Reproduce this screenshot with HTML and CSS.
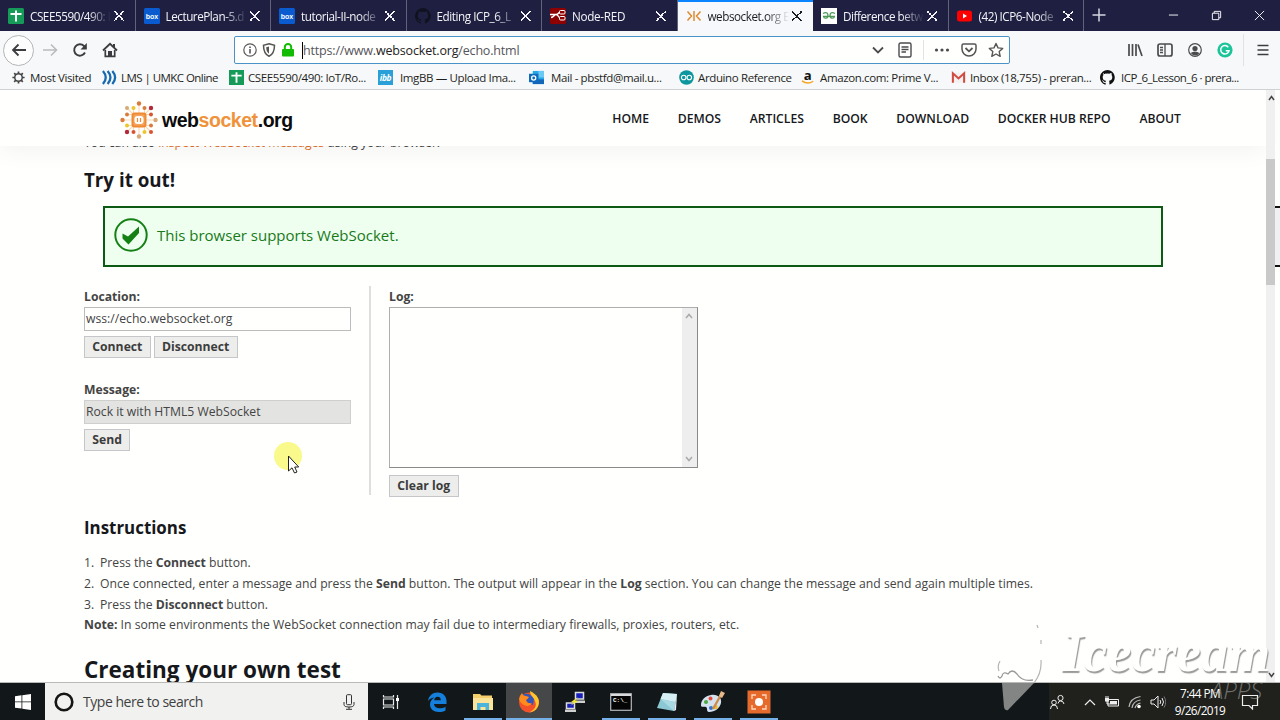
FILE: index.html
```html
<!DOCTYPE html>
<html lang="en">
<head>
  <meta charset="UTF-8">
  <title>websocket.org Echo Test</title>
  <link rel="stylesheet" href="styles.css">
</head>
<body>

  <!-- tabs -->
  <div class="tabs">
    <div class="tab"><svg class="ico" viewBox="0 0 16 16"><rect width="16" height="16" rx="1.5" fill="#169a57"/><path d="M8 2.500v11M2.500 6h11" stroke="#fff" stroke-width="2"/></svg><span>CSEE5590/490: I</span><b class="close"></b></div>
    <div class="tab"><svg class="ico" viewBox="0 0 16 16"><rect width="16" height="16" rx="1.500" fill="#0a5bd0"/><text x="8" y="10.500" class="box-text">box</text></svg><span>LecturePlan-5.d</span><b class="close"></b></div>
    <div class="tab"><svg class="ico" viewBox="0 0 16 16"><rect width="16" height="16" rx="1.500" fill="#0a5bd0"/><text x="8" y="10.500" class="box-text">box</text></svg><span>tutorial-II-node</span><b class="close"></b></div>
    <div class="tab"><svg class="ico" viewBox="0 0 16 16"><path fill="#11121f" d="M8 0a8 8 0 0 0-2.500 15.600c.4.100.5-.2.500-.4v-1.500c-2.200.5-2.700-1-2.700-1-.4-.9-.9-1.200-.9-1.200-.7-.5.100-.5.100-.5.800.100 1.200.8 1.200.8.7 1.300 1.900.9 2.300.7.100-.5.300-.9.500-1.100-1.800-.2-3.600-.9-3.600-4 0-.9.300-1.600.8-2.100-.1-.2-.4-1 .1-2.100 0 0 .7-.2 2.200.8a7.700 7.700 0 0 1 4 0c1.500-1 2.200-.8 2.200-.8.4 1.100.2 1.900.1 2.100.5.600.8 1.300.8 2.100 0 3.100-1.900 3.800-3.700 4 .3.200.6.700.6 1.500v2.200c0 .2.100.5.500.4A8 8 0 0 0 8 0z"/></svg><span>Editing ICP_6_L</span><b class="close"></b></div>
    <div class="tab"><svg class="ico" viewBox="0 0 16 16"><rect width="16" height="16" rx="1.500" fill="#8f0000"/><path d="M0 6.500h6c3 0 2-2.500 5-2.500M1 9.500c3 0 3-3 5-3 3 0 2 4 5 4" fill="none" stroke="#fff" stroke-width="1.300"/><rect x="9.500" y="2.500" width="5.500" height="3.500" rx="1" fill="#8f0000" stroke="#fff"/><rect x="9.500" y="8.500" width="5.500" height="3.500" rx="1" fill="#8f0000" stroke="#fff"/></svg><span class="plain">Node-RED</span><b class="close"></b></div>
    <div class="tab active"><svg class="ico" viewBox="0 0 16 16"><path d="M1.500 3.500l4 4.500-4 4.500M14.500 3.500l-4 4.500 4 4.500M8 3v10" fill="none" stroke="#e08a2c" stroke-width="1.500"/></svg><span>websocket.org E</span><b class="close"></b></div>
    <div class="tab"><svg class="ico" viewBox="0 0 16 16"><rect width="16" height="16" fill="#fff"/><path d="M2 5.500c4-2 5 0 5 2.500s-4 3-4.500.300H14M14 5.500c-4-2-5 0-5 2.500s4 3 4.500.300" fill="none" stroke="#4c9a55" stroke-width="1.300"/></svg><span>Difference betw</span><b class="close"></b></div>
    <div class="tab"><svg class="ico" viewBox="0 0 16 16"><rect y="2.500" width="15" height="11" rx="2.500" fill="#f00"/><path d="M6 5.500v5l4-2.500z" fill="#fff"/></svg><span>(42) ICP6-Node</span><b class="close"></b></div>
    <div class="new-tab"><svg width="14" height="14" viewBox="0 0 14 14"><path d="M7 .5v13M.5 7h13" stroke="#d5d5df" stroke-width="1.500"/></svg></div>
    <div class="win-buttons">
      <svg viewBox="0 0 12 12"><path d="M1 5.500h10" stroke="#fff"/></svg>
      <svg viewBox="0 0 12 12"><path d="M1.500 3.500h7v7h-7zM3.500 3.500v-2h7v7h-2" fill="none" stroke="#fff"/></svg>
      <svg viewBox="0 0 12 12"><path d="M1 1l10 10M11 1L1 11" stroke="#fff"/></svg>
    </div>
  </div>

  <!-- address bar -->
  <div class="toolbar">
    <div class="nav-buttons">
      <span class="back"><svg class="ico" viewBox="0 0 16 16"><path d="M15 8H2M7.500 2.500L2 8l5.500 5.500" fill="none" stroke="#3c3c40" stroke-width="1.800"/></svg></span>
      <svg class="ico" viewBox="0 0 16 16"><path d="M1 8h13M9 2.500L14.500 8 9 13.500" fill="none" stroke="#b9bbbc" stroke-width="1.600"/></svg>
      <svg class="ico" viewBox="0 0 16 16"><path d="M13 10.500A5.700 5.700 0 1 1 12 4l1.500 2" fill="none" stroke="#3c3c40" stroke-width="1.900"/><path d="M14.800 1v6.500H8.500z" fill="#3c3c40"/></svg>
      <svg class="ico" viewBox="0 0 16 16"><path d="M1 8.500L8 1.800l7 6.700" fill="none" stroke="#3c3c40" stroke-width="1.800"/><path d="M3.300 8v6.300h9.400V8" fill="none" stroke="#3c3c40" stroke-width="1.700"/><path d="M6 14V9h4v5zM11 2h2v4l-2-2z" fill="#3c3c40"/></svg>
    </div>
    <div class="url-bar">
      <svg class="ico" viewBox="0 0 16 16"><circle cx="8" cy="8" r="6.200" fill="none" stroke="#5a5a5d" stroke-width="1.200"/><path d="M8 7v4.500M8 4.500v1.500" stroke="#4b4b4e" stroke-width="1.500"/></svg>
      <svg class="ico" viewBox="0 0 16 16"><path d="M8 1.800l5.500 1.500c0 5-1 9-5.500 11-4.500-2-5.500-6-5.500-11z" fill="none" stroke="#555" stroke-width="1.500"/><path d="M8 4.500l-2.800.8c.1 3.200.8 5 2.800 6.500z" fill="#555"/></svg>
      <svg class="ico" viewBox="0 0 16 16"><rect x="2" y="7" width="12" height="7.500" rx="1" fill="#12bc00"/><path d="M4.800 8V5.200a3.200 3.200 0 0 1 6.400 0V8" fill="none" stroke="#12bc00" stroke-width="2"/></svg>
      <span class="url">https://www.<em>websocket.org</em>/echo.html</span>
      <div class="url-actions">
        <svg class="ico" viewBox="0 0 16 16"><path d="M3 5.500L8 10.500l5-5" fill="none" stroke="#4b4b4e" stroke-width="1.800"/></svg>
        <svg class="ico reader" viewBox="0 0 16 16"><rect x="2" y="1" width="12" height="14" rx="1.500" fill="none" stroke="#4b4b4e" stroke-width="1.400"/><path d="M4.500 5h7M4.500 7.500h7M4.500 10h4.500" stroke="#4b4b4e" stroke-width="1.300"/></svg>
        <i class="sep"></i>
        <svg class="ico" viewBox="0 0 16 16"><circle cx="2.500" cy="8" r="1.600" fill="#4b4b4e"/><circle cx="8" cy="8" r="1.600" fill="#4b4b4e"/><circle cx="13.500" cy="8" r="1.600" fill="#4b4b4e"/></svg>
        <svg class="ico" viewBox="0 0 16 16"><path d="M2.500 2h11q1.500 0 1.500 1.500V7a7 7 0 0 1-14 0V3.500Q1 2 2.500 2z" fill="none" stroke="#555" stroke-width="1.500"/><path d="M4.500 6L8 9.300 11.500 6" fill="none" stroke="#555" stroke-width="1.800"/></svg>
        <svg class="ico" viewBox="0 0 16 16"><path d="M8 1.500l2 4.400 4.700.5-3.500 3.200 1 4.700L8 12l-4.200 2.300 1-4.700L1.300 6.400 6 5.900z" fill="none" stroke="#555" stroke-width="1.400" stroke-linejoin="round"/></svg>
      </div>
    </div>
    <div class="tool-icons">
      <svg class="ico" viewBox="0 0 16 16"><path d="M2 2v12M5.500 2v12M9 2v12M11 2.500l4 11.500" stroke="#4b4b4e" stroke-width="1.700"/></svg>
      <svg class="ico" viewBox="0 0 16 16"><rect x="1" y="2" width="14" height="12" rx="2" fill="none" stroke="#4b4b4e" stroke-width="1.700"/><path d="M8 2v12M3 5.500h3M3 8h3M3 10.500h3" stroke="#4b4b4e" stroke-width="1.300"/></svg>
      <svg class="ico" viewBox="0 0 16 16"><circle cx="8" cy="8" r="6.300" fill="none" stroke="#4b4b4e" stroke-width="1.200"/><circle cx="8" cy="6.500" r="2.600" fill="#4b4b4e"/><path d="M3.500 11q4.500-3 9 0-4 5-9 0z" fill="#4b4b4e"/></svg>
      <svg class="ico" viewBox="0 0 16 16"><circle cx="8" cy="8" r="7.600" fill="#1cc49a"/><path d="M11.300 5.300a4.200 4.200 0 1 0 .7 3.500H8.800" fill="none" stroke="#fff" stroke-width="1.500"/></svg>
      <div class="menu"><svg class="ico" viewBox="0 0 16 16"><path d="M2.500 3.500h11M2.500 8h11M2.500 12.500h11" stroke="#3c3c40" stroke-width="1.600"/></svg></div>
    </div>
  </div>

  <!-- bookmarks -->
  <div class="bookmarks">
    <div><svg class="ico" viewBox="0 0 16 16"><circle cx="8" cy="8" r="4" fill="none" stroke="#444" stroke-width="1.600"/><path d="M8 1.500V4M8 12v2.500M1.500 8H4M12 8h2.500M3.400 3.400l1.800 1.800M10.800 10.800l1.800 1.800M12.600 3.400l-1.800 1.800M5.200 10.800l-1.800 1.800" stroke="#444" stroke-width="1.800"/></svg><span>Most Visited</span></div>
    <div><svg class="ico" viewBox="0 0 16 16"><path d="M1 1q6 7 0 14M6 1q6 7 0 14M11 1q6 7 0 14" fill="none" stroke="#1769b0" stroke-width="2.400"/></svg><span class="lms">LMS | UMKC Online</span></div>
    <div><svg class="ico" viewBox="0 0 16 16"><rect width="16" height="16" fill="#169a57"/><path d="M8 2.500v11M2.500 6h11" stroke="#fff" stroke-width="2"/></svg><span>CSEE5590/490: IoT/Ro...</span></div>
    <div class="wide"><svg class="ico" viewBox="0 0 16 16"><rect width="16" height="16" fill="#2aa0d8"/><text x="8" y="12" class="ibb-text">ibb</text></svg><span>ImgBB — Upload Ima...</span></div>
    <div class="wide"><svg class="ico" viewBox="0 0 16 16"><path d="M4 1h12v14H4z" fill="#28a8ea"/><path d="M10 1h6v7h-6z" fill="#6cc9f5"/><path d="M4 10h12v5H4z" fill="#1466b8"/><rect y="4" width="10" height="9" fill="#0f6cbd"/><circle cx="5" cy="8.500" r="2.200" fill="none" stroke="#fff" stroke-width="1.400"/></svg><span>Mail - pbstfd@mail.u...</span></div>
    <div><svg class="ico" viewBox="0 0 16 16"><circle cx="8" cy="8" r="7.800" fill="#0b979d"/><circle cx="5" cy="8" r="2.400" fill="none" stroke="#fff" stroke-width="1.200"/><circle cx="11" cy="8" r="2.400" fill="none" stroke="#fff" stroke-width="1.200"/></svg><span>Arduino Reference</span></div>
    <div><svg class="ico" viewBox="0 0 16 16"><text x="7" y="11" class="amz-text">a</text><path d="M1 11.500q6 4.500 12 .5" fill="none" stroke="#f5a623" stroke-width="1.600"/></svg><span>Amazon.com: Prime V...</span></div>
    <div><svg class="ico" viewBox="0 0 16 16"><path d="M1 3h14v10.500H1z" fill="#f3f0ef"/><path d="M2 13.500V3.500L8 9l6-5.500v10" fill="none" stroke="#d04b42" stroke-width="2.200"/></svg><span>Inbox (18,755) - preran...</span></div>
    <div><svg class="ico" viewBox="0 0 16 16"><path fill="#111" d="M8 0a8 8 0 0 0-2.500 15.600c.4.100.5-.2.500-.4v-1.500c-2.200.5-2.700-1-2.700-1-.4-.9-.9-1.200-.9-1.200-.7-.5.100-.5.100-.5.800.100 1.200.8 1.200.8.7 1.300 1.900.9 2.300.7.100-.5.300-.9.500-1.100-1.800-.2-3.600-.9-3.600-4 0-.9.300-1.600.8-2.100-.1-.2-.4-1 .1-2.100 0 0 .7-.2 2.200.8a7.700 7.700 0 0 1 4 0c1.500-1 2.200-.8 2.200-.8.4 1.100.2 1.900.1 2.100.5.600.8 1.300.8 2.100 0 3.100-1.900 3.800-3.700 4 .3.200.6.700.6 1.500v2.200c0 .2.100.5.500.4A8 8 0 0 0 8 0z"/></svg><span class="tight">ICP_6_Lesson_6 · prera...</span></div>
  </div>

  <!-- page -->
  <div class="viewport">
    <header>
      <div class="logo">
        <svg width="38" height="38" viewBox="0 0 38 38">
          <path d="M19 3v10M19 25v10M3 19h10M25 19h10M13.500 7v7M24.500 7v7M13.500 31v-7M24.500 31v-7M7 13.500h7M7 24.500h7M31 13.500h-7M31 24.500h-7M7 7l7 7M31 7l-7 7M7 31l7-7M31 31l-7-7" stroke="#f9d9b6" stroke-width="1.100"/>
          <rect x="12.500" y="12.500" width="13" height="13" rx="2" fill="#f4a45c" stroke="#ee8a33" stroke-width="2"/>
          <rect x="14.500" y="15" width="9" height="8" rx="3" fill="#fff"/>
          <path d="M17.500 17v4M20.500 17v4" stroke="#ee8a33" stroke-width="1.200"/>
          <g fill="#d97b3c"><circle cx="19" cy="2.500" r="2.200"/><circle cx="2.500" cy="19" r="2.200"/><circle cx="7" cy="13.500" r="2"/><circle cx="24.500" cy="7" r="2"/><circle cx="31" cy="24.500" r="2"/></g>
          <g fill="#eec52d"><circle cx="13.500" cy="7" r="2"/><circle cx="7" cy="24.500" r="2"/><circle cx="24.500" cy="31" r="2"/></g>
          <g fill="#b5283c"><circle cx="31" cy="7" r="2.200"/><circle cx="7" cy="31" r="2.200"/></g>
          <g fill="#d8532f"><circle cx="31" cy="13.500" r="2"/><circle cx="13.500" cy="31" r="2"/><circle cx="31" cy="31" r="2"/></g>
          <g fill="#d7a977"><circle cx="7" cy="7" r="2"/><circle cx="35.500" cy="19" r="2.200"/><circle cx="19" cy="35.500" r="2.200"/></g>
        </svg>
        <span>web<i>socket</i>.org</span>
      </div>
      <nav>
        <a>HOME</a><a>DEMOS</a><a>ARTICLES</a><a>BOOK</a><a>DOWNLOAD</a><a>DOCKER HUB REPO</a><a>ABOUT</a>
      </nav>
    </header>

    <main>
      <p class="intro">You can also <a>inspect WebSocket messages</a> using your browser.</p>
      <h3 class="try">Try it out!</h3>
      <div class="support">
        <svg width="34" height="34" viewBox="0 0 34 34"><circle cx="17" cy="17" r="15.700" fill="none" stroke="#148014" stroke-width="2"/><path d="M8.500 15.500L14 18.500 25 8.500V15L14.500 26.500 8.500 20.500z" fill="#148014"/></svg>
        <span>This browser supports WebSocket.</span>
      </div>

      <div class="echo">
        <div class="left">
          <label>Location:</label>
          <div class="input">wss://echo.websocket.org</div>
          <div class="buttons"><button>Connect</button><button>Disconnect</button></div>
          <label class="message">Message:</label>
          <div class="input disabled">Rock it with HTML5 WebSocket</div>
          <div class="buttons"><button>Send</button></div>
        </div>
        <div class="right">
          <label>Log:</label>
          <div class="log">
            <div class="log-scroll">
              <svg width="10" height="8" viewBox="0 0 10 8"><path d="M2 6l3-3.500L8 6" fill="none" stroke="#a9a9a9" stroke-width="1.500"/></svg>
              <svg width="10" height="8" viewBox="0 0 10 8"><path d="M2 2l3 3.500L8 2" fill="none" stroke="#a9a9a9" stroke-width="1.500"/></svg>
            </div>
          </div>
          <div class="buttons"><button>Clear log</button></div>
        </div>
      </div>

      <h3 class="instructions">Instructions</h3>
      <ol>
        <li>Press the <b>Connect</b> button.</li>
        <li>Once connected, enter a message and press the <b>Send</b> button. The output will appear in the <b>Log</b> section. You can change the message and send again multiple times.</li>
        <li>Press the <b>Disconnect</b> button.</li>
      </ol>
      <p class="note"><b>Note:</b> In some environments the WebSocket connection may fail due to intermediary firewalls, proxies, routers, etc.</p>
      <h2>Creating your own test</h2>
    </main>

    <div class="scrollbar">
      <svg width="9" height="8" viewBox="0 0 9 8"><path d="M3 6l2.500-3.500L8 6" fill="none" stroke="#444" stroke-width="1.500"/></svg>
      <div class="thumb"></div>
      <svg class="down" width="9" height="8" viewBox="0 0 9 8"><path d="M3 2l2.500 3.500L8 2" fill="none" stroke="#444" stroke-width="1.500"/></svg>
    </div>
    <div class="edge"><div class="edge-box"></div></div>
  </div>

  <!-- taskbar -->
  <div class="taskbar">
    <div class="start"><svg width="16" height="16" viewBox="0 0 16 16"><path d="M0 2.200L6.500 1.300v6.200H0zM7.300 1.200L16 0v7.500H7.300zM0 8.300h6.500v6.300L0 13.700zM7.300 8.300H16V16l-8.700-1.300z" fill="#fff"/></svg></div>
    <div class="search">
      <svg width="20" height="20" viewBox="0 0 20 20"><circle cx="10" cy="10" r="8.300" fill="none" stroke="#151515" stroke-width="2.600"/></svg>
      <span>Type here to search</span>
      <svg width="12" height="16" viewBox="0 0 12 16"><rect x="3.500" y=".7" width="5" height="10" rx="1" fill="none" stroke="#333"/><path d="M1 8v2.500Q1 13 6 13t5-2.500V8M6 13v2.300M3 15.300h6" fill="none" stroke="#333"/></svg>
    </div>
    <div class="apps">
      <div><svg width="18" height="16" viewBox="0 0 18 16"><path d="M1.500 1v2h10V1M1.500 15v-2h10v2M1.500 5h10v6h-10zM15.500 1v14" fill="none" stroke="#e8e8e8" stroke-width="1.200"/><rect x="14" y="4" width="3" height="3" fill="#fff"/></svg></div>
      <div><svg width="20" height="20" viewBox="0 0 20 20"><path d="M1 9C2 3.500 5.500.500 10.500.500c6 0 9 4 9 9V12H7c.3 3 2.500 4.300 5.500 4.300 2.500 0 4.500-.5 6-1.500v3.700c-2 1-4 1.500-6.500 1.500-5.500 0-9-3-9-7.500 0-3 1.800-5.500 4.500-7C4 6 2.300 7 1 9zm6.200-.8h6.600c0-2.200-1-3.500-3.200-3.500-1.900 0-3.100 1.400-3.400 3.500z" fill="#1480dc"/></svg></div>
      <div class="open"><svg width="20" height="18" viewBox="0 0 20 18"><path d="M0 1h7l1.500 1.500H19V17H0z" fill="#f5cf6b"/><path d="M0 5h20v12H0z" fill="#fbe39a"/><path d="M4 17v-7h12v7h-3.500v-3h-5v3z" fill="#4cb4dc"/></svg></div>
      <div class="open current"><svg width="22" height="22" viewBox="0 0 22 22"><circle cx="11" cy="11.500" r="10" fill="#f4502a"/><path d="M12 0c8 4 10 9 8.500 14S15 21 11 21.500c4-2 8-5 6.500-10C16.500 7 12 5 12 0z" fill="#ffc52d"/><path d="M4 4q7-4 12 4l-1 6-5-2z" fill="#3355b7"/><path d="M1 8q1-4 3-6 1 3 4 3l3 1q-1 2-3 3 1 4 6 3-3 5-8 2-4-2-5-6z" fill="#ff8a1d"/></svg></div>
      <div><svg width="22" height="22" viewBox="0 0 22 22"><rect x="11.500" y="1.500" width="8" height="6.500" fill="#1620b8" stroke="#dcdcdc" stroke-width="1.500"/><rect x="10" y="9.500" width="11" height="2.500" fill="#cfcfcf"/><rect x="2.500" y="12" width="8" height="5.500" fill="#1620b8" stroke="#dcdcdc" stroke-width="1.500"/><rect x="1" y="18.500" width="11" height="2.500" fill="#cfcfcf"/><path d="M14 6l-7 5 3 .5L6 15l8-5-3-.5z" fill="#f6e82a"/></svg></div>
      <div class="open"><svg width="22" height="18" viewBox="0 0 22 18"><rect x=".7" y=".7" width="20.600" height="16.600" fill="#050505" stroke="#b4b8bb" stroke-width="1.200"/><path d="M1 2h20" stroke="#d8dadb" stroke-width="2"/><text x="3" y="9" class="cmd-text">C:\_</text></svg></div>
      <div class="open"><svg width="22" height="20" viewBox="0 0 22 20"><path d="M7 1l14 1-3 17-17-3z" fill="#8cc8d4"/><path d="M7 1l14 1-1.500 8L4.500 7z" fill="#d5eff2"/><path d="M4.500 7l15 3-1.500 9z" fill="#a9d9e2"/><path d="M21 2l-1 16-2 1z" fill="#e8eef0"/></svg></div>
      <div class="open"><svg width="24" height="22" viewBox="0 0 24 22"><path d="M10 4c7-1 11 3 10 8s-6 9-12 9c-3 0-1-4-3-5s-5 1-5-2C0 9 4 5 10 4z" fill="#d4e2f0"/><circle cx="5" cy="11" r="2" fill="#49a942"/><circle cx="9.500" cy="7.500" r="2" fill="#e54b3a"/><circle cx="14.500" cy="16" r="2.200" fill="#f0b92c"/><circle cx="10" cy="17" r="2" fill="#3574cc"/><path d="M21 2L12 18" stroke="#cc8a45" stroke-width="2.200"/><path d="M20 0l4 2-3 5-3-2z" fill="#e5b98a"/></svg></div>
      <div class="open"><svg width="24" height="24" viewBox="0 0 24 24"><rect x=".5" y=".5" width="23" height="23" fill="#e56a2b"/><circle cx="12" cy="12" r="4" fill="#fff"/><path d="M5 9V5h4M15 5h4v4M19 15v4h-4M9 19H5v-4" fill="none" stroke="#ffd9bf" stroke-width="1.300"/></svg></div>
    </div>
    <div class="tray">
      <svg width="16" height="16" viewBox="0 0 16 16"><circle cx="5" cy="8.500" r="2.300" fill="none" stroke="#eee"/><path d="M1.500 15q0-4 3.500-4t3.500 4M9 9.500q.5-2.500 2.500-2.500 3 0 3.500 3" fill="none" stroke="#eee"/><circle cx="11.500" cy="4" r="2.600" fill="none" stroke="#eee"/></svg>
      <svg width="12" height="8" viewBox="0 0 12 8"><path d="M1 7l5-5 5 5" fill="none" stroke="#eee" stroke-width="1.200"/></svg>
      <svg width="16" height="12" viewBox="0 0 16 12"><path d="M4 3.500h10.500v6.500H4z" fill="none" stroke="#eee"/><path d="M6 5h7v3.500H6zM1 2h4v3.500H1z" fill="#eee"/><path d="M2 0v2M4 0v2M3 5v3h3" stroke="#eee" fill="none"/></svg>
      <svg width="14" height="14" viewBox="0 0 14 14"><path d="M1 12Q2 3 12.500 1.500M4 13q1-7 8.500-8M7 13q1-4 5.500-5" fill="none" stroke="#bbb" stroke-width="1.200"/><circle cx="11" cy="11.500" r="1.800" fill="#fff"/></svg>
      <svg width="16" height="14" viewBox="0 0 16 14"><path d="M1 5h3l4-4v12L4 9H1zM10 5q1.500 2 0 4M12 3q3 4 0 8" fill="none" stroke="#eee"/><path d="M14 1.500q3.500 5.500 0 11" fill="none" stroke="#777"/></svg>
      <div class="clock">7:44 PM<br>9/26/2019</div>
      <svg class="notify" width="18" height="16" viewBox="0 0 18 16"><path d="M1.500 1.500h15v10h-5v3.500L8 11.500H1.500z" fill="none" stroke="#eee" stroke-width="1.200"/></svg>
    </div>
  </div>

  <!-- recorder watermark -->
  <div class="watermark">
    <svg class="cone" width="52" height="90" viewBox="0 0 52 90">
      <path d="M6 59h32L12 86q-3 1-4-3z" fill="#aaa" opacity=".75"/>
      <path d="M2 52q2 4 4 0 1-5 6-2 4-6 9 0 5 8 16 6" fill="none" stroke="#999" stroke-width="1.300"/>
      <path d="M38 59q8-10 7-23M41 1l1 3M45 16v4M4 37q-3 5-1 10" fill="none" stroke="#b5b5b5" stroke-width="1.200"/>
    </svg>
    <span class="brand">Icecream</span>
    <span class="apps-word">APPS</span>
  </div>

  <!-- mouse pointer -->
  <div class="pointer"><svg width="14" height="20" viewBox="0 0 14 20"><path d="M1.500 1v15l3.500-3.200L7.500 18l2.500-1-2.300-5h4z" fill="#fff" stroke="#222"/></svg></div>

</body>
</html>
```
FILE: styles.css
```css
* {
  box-sizing: border-box;
}

body {
  margin: 0;
  width: 1280px;
  height: 720px;
  overflow: hidden;
  position: relative;
  display: flex;
  flex-direction: column;
  font-family: "Open Sans", "Noto Sans", sans-serif;
  font-size: 12.2px;
  color: #444;
  background: #fffffd;
}

svg {
  display: block;
  flex: none;
}

.ico {
  width: 16px;
  height: 16px;
}

/* tabs */
.tabs {
  height: 31px;
  flex: none;
  display: flex;
  background: #1f2041;
  color: #f4f4f8;
  font-size: 11.7px;
}

.tab {
  width: 135.5px;
  flex: none;
  padding: 1px 10px 0 8px;
  display: flex;
  align-items: center;
  border-right: 1px solid #62637b;
}

.tab span {
  width: 81px;
  margin-left: 6px;
  overflow: hidden;
  white-space: nowrap;
  letter-spacing: -0.45px;
  -webkit-mask-image: linear-gradient(to right, #000 72%, transparent 100%);
  mask-image: linear-gradient(to right, #000 72%, transparent 100%);
}

.tab .plain {
  letter-spacing: -0.3px;
}

.tab.active {
  background: #f6f8fb;
  color: #1c1c20;
  border-top: 2px solid #0a84ff;
  padding-top: 0;
  padding-bottom: 1px;
  border-right: 0;
}

.close {
  width: 10px;
  height: 10px;
  margin-left: 3px;
  background:
    linear-gradient(45deg, transparent 45%, currentColor 45%, currentColor 55%, transparent 55%),
    linear-gradient(-45deg, transparent 45%, currentColor 45%, currentColor 55%, transparent 55%);
}

.box-text {
  font: bold 7px "Liberation Sans", sans-serif;
  fill: #fff;
  text-anchor: middle;
}

.new-tab {
  margin: 8px 0 0 8px;
}

.win-buttons {
  margin-left: auto;
  padding-right: 15px;
  display: flex;
  align-items: center;
  gap: 32px;
}

.win-buttons svg {
  width: 11px;
  height: 11px;
}

/* address bar */
.toolbar {
  height: 35px;
  flex: none;
  display: flex;
  align-items: center;
  padding-top: 3px;
  background: #f6f8f9;
}

.nav-buttons {
  width: 234px;
  padding-left: 3px;
  display: flex;
  align-items: center;
  gap: 14px;
}

.back {
  width: 31px;
  height: 31px;
  margin-right: -6px;
  display: flex;
  align-items: center;
  justify-content: center;
  border: 1px solid #b5b6b8;
  border-radius: 50%;
  background: #fdfdfd;
}

.url-bar {
  width: 776px;
  height: 28px;
  padding: 0 5px 0 7px;
  display: flex;
  align-items: center;
  gap: 3px;
  border: 1px solid #4a93c8;
  background: #fffffe;
  border-radius: 2px;
}

.url {
  margin-left: 3px;
  padding-top: 1px;
  border-left: 1px solid #000;
  line-height: 16px;
  font-size: 12.5px;
  letter-spacing: -0.17px;
  color: #55555a;
}

.url em {
  font-style: normal;
  color: #222;
}

.url-actions {
  margin-left: auto;
  display: flex;
  gap: 11px;
}

.sep {
  width: 1px;
  margin: -2px -1px;
  background: #e2e3e4;
}

.tool-icons {
  margin-left: auto;
  padding-right: 9px;
  display: flex;
  gap: 14px;
}

.menu {
  margin: -8px 0 -8px -4px;
  padding: 8px 0 8px 11px;
  border-left: 1px solid #e0e2e3;
}

/* bookmarks */
.bookmarks {
  height: 24px;
  flex: none;
  display: grid;
  padding-left: 11px;
  grid-template-columns: 91px 127px 149px 151px 150px 122px 150px 149px 150px;
  align-items: center;
  background: #f6f8f9;
  border-bottom: 1px solid #cfd1d2;
  color: #1f1f22;
  font-size: 11.5px;
  letter-spacing: -0.37px;
}

.bookmarks div {
  display: flex;
  align-items: center;
  gap: 4px;
  white-space: nowrap;
}

.bookmarks .wide {
  gap: 7px;
}

.bookmarks .lms {
  letter-spacing: -0.55px;
}

.bookmarks .tight {
  margin-left: 2px;
  letter-spacing: -0.5px;
}

.bookmarks .ico {
  width: 15px;
  height: 15px;
}

.ibb-text {
  font: italic bold 9px "Open Sans", sans-serif;
  fill: #fff;
  text-anchor: middle;
}

.amz-text {
  font: bold 14px "Open Sans", sans-serif;
  fill: #111;
  text-anchor: middle;
}

/* page */
.viewport {
  height: 593px;
  flex: none;
  position: relative;
  display: flex;
  overflow: hidden;
  border-bottom: 1px solid #b9b9b7;
}

header {
  position: absolute;
  top: 0;
  left: 0;
  width: 1266px;
  height: 56px;
  padding: 0 85px 0 120px;
  display: flex;
  align-items: center;
  justify-content: space-between;
  background: #fffffd;
  box-shadow: 0 5px 24px rgba(0, 0, 0, 0.05);
}

.logo {
  display: flex;
  align-items: center;
  gap: 4px;
  padding-top: 4px;
  font: bold 19.5px "Liberation Sans", sans-serif;
  letter-spacing: -0.45px;
  color: #0b0b0b;
}

.logo i {
  font-style: normal;
  color: #f0923a;
}

nav {
  display: flex;
  gap: 28.7px;
  font-size: 12.2px;
  font-weight: 600;
  color: #16181c;
}

main {
  width: 1266px;
  padding: 43px 103px 0 84px;
}

.intro {
  margin: 0;
  line-height: 20px;
}

.intro a {
  color: #e0702a;
}

h2, h3 {
  margin: 0;
  color: #16181c;
}

.try {
  margin-top: 14px;
  font-size: 18.75px;
  line-height: 26px;
}

.support {
  height: 61px;
  margin: 13px 0 0 19px;
  padding: 0 0 4px 9px;
  display: flex;
  align-items: center;
  gap: 9px;
  border: 2px solid #0c5a14;
  background: #eefff0;
  color: #187a18;
  font-size: 15px;
}

.support span {
  padding-top: 1px;
}

.echo {
  display: flex;
  margin-top: 19px;
}

.echo label {
  display: block;
  font-weight: bold;
  line-height: 21px;
}

.left {
  width: 287px;
  height: 209px;
  padding-right: 18px;
  border-right: 2px solid #dededc;
}

.right {
  margin-left: 18px;
}

.input {
  height: 24px;
  padding-left: 1px;
  line-height: 22px;
  border: 1px solid #bcbcbc;
  background: #fffffe;
}

.input.disabled {
  background: #e3e3e1;
  border-color: #cfcfcd;
}

.buttons {
  display: flex;
  gap: 3px;
  margin-top: 5px;
}

button {
  height: 22px;
  padding: 0 7.3px;
  font: bold 12.2px "Open Sans", sans-serif;
  line-height: 20px;
  color: #3c3c3c;
  background: #ededeb;
  border: 1px solid #c5c6ca;
}

.message {
  margin-top: 21px;
}

.log {
  width: 309px;
  height: 161px;
  display: flex;
  justify-content: flex-end;
  border: 1px solid #aeaeae;
  border-right-color: #8a8a8a;
  border-bottom-color: #8a8a8a;
}

.log-scroll {
  width: 15px;
  padding: 4px 3px 4px 2px;
  display: flex;
  flex-direction: column;
  justify-content: space-between;
  background: #eeeeee;
}

.right .buttons {
  margin-top: 7px;
}

.instructions {
  margin-top: 18px;
  font-size: 16.9px;
  line-height: 26px;
}

ol {
  margin: 11px 0 0;
  padding: 0;
  list-style: none;
  counter-reset: step;
}

li {
  line-height: 21px;
  white-space: nowrap;
  counter-increment: step;
}

li::before {
  content: counter(step) ".";
  display: inline-block;
  width: 16px;
}

.note {
  margin: 0;
  line-height: 20px;
}

h2 {
  margin-top: 18px;
  font-size: 22.5px;
  line-height: 34px;
}

.scrollbar {
  width: 9px;
  position: relative;
  background: #f0f0f0;
}

.scrollbar svg {
  margin-top: 4px;
}

.thumb {
  height: 126px;
  margin-top: 57px;
  background: #c9c9c9;
}

.scrollbar .down {
  position: absolute;
  bottom: 3px;
}

.edge {
  width: 5px;
  padding-top: 116px;
}

.edge-box {
  height: 61px;
  border-top: 2px solid #111;
  border-bottom: 2px solid #111;
  background: #f0f0f4;
}

/* taskbar */
.taskbar {
  height: 37px;
  flex: none;
  display: flex;
  background: #12181a;
}

.start {
  width: 45px;
  display: flex;
  align-items: center;
  justify-content: center;
}

.search {
  width: 323px;
  padding: 0 13px 0 9px;
  display: flex;
  align-items: center;
  background: #f1f2ef;
  color: #3f4142;
  font-size: 14px;
  letter-spacing: -0.47px;
}

.search span {
  flex: 1;
  margin-left: 9px;
}

.apps {
  display: flex;
}

.apps div {
  width: 46px;
  display: flex;
  align-items: center;
  justify-content: center;
}

.apps .open {
  background: linear-gradient(#76b0e8, #76b0e8) center bottom / 38px 2px no-repeat;
}

.apps .current {
  background: linear-gradient(#76b0e8, #76b0e8) center bottom / 46px 2px no-repeat #454748;
}

.cmd-text {
  font: bold 6px "Liberation Mono", monospace;
  fill: #fff;
}

.tray {
  margin-left: auto;
  padding-right: 21px;
  display: flex;
  align-items: center;
  gap: 8px;
  background: #20211d;
}

.tray svg:first-child {
  margin-right: 11px;
}

.clock {
  width: 52px;
  text-align: center;
  color: #fff;
  font-size: 11.8px;
  line-height: 17px;
  letter-spacing: -0.6px;
  white-space: nowrap;
}

.notify {
  margin-left: 7px;
}

/* overlays */
.watermark {
  position: absolute;
  left: 996px;
  top: 624px;
  width: 284px;
  height: 96px;
  overflow: hidden;
}

.brand {
  position: absolute;
  left: 66px;
  top: -1px;
  font: italic bold 54px "Liberation Serif", serif;
  line-height: 60px;
  letter-spacing: 0.2px;
  color: #fffffd;
  text-shadow: 1px 1.5px 1px #999;
}

.apps-word {
  position: absolute;
  left: 214px;
  top: 52px;
  font: italic 300 24px "Open Sans", sans-serif;
  line-height: 28px;
  color: rgba(190, 190, 185, 0.5);
}

.pointer {
  position: absolute;
  left: 274px;
  top: 442px;
  width: 28px;
  height: 28px;
  border-radius: 50%;
  background: #f9f98c;
}

.pointer svg {
  margin: 13px 0 0 13px;
}
```
